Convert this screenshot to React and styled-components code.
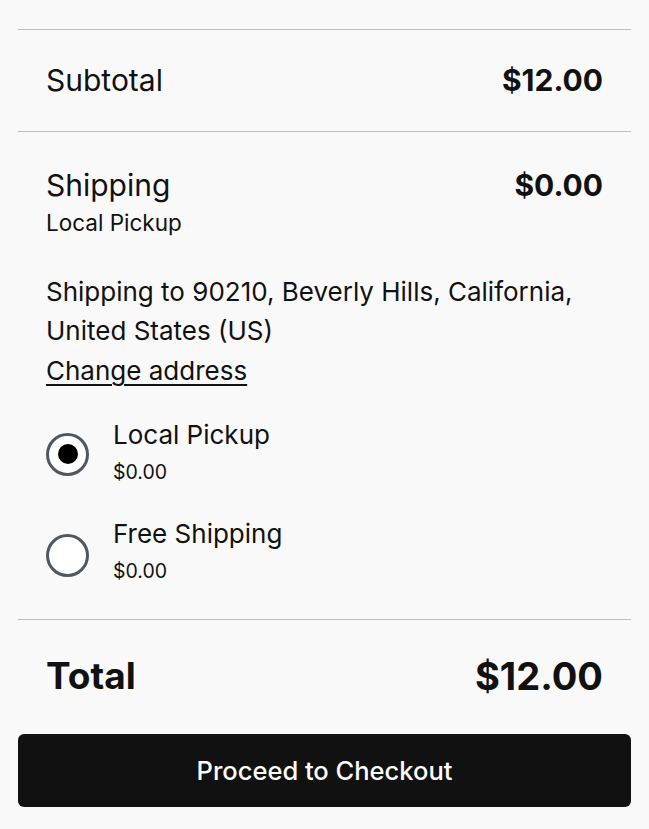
import React, {useState} from 'react';
import styled, {createGlobalStyle} from 'styled-components';

const GlobalStyle = createGlobalStyle`
    body {
        margin: 0;
        background: #f9f9f9;
        font-family: Inter, "Noto Sans", sans-serif;
        color: #111;
    }
`;

const Wrapper = styled.div`
    padding: 29px 18px 22px;
`;

const Section = styled.div`
    border-top: 1px solid #bdbdbd;
    padding: ${props => props.pad || '0 28px'};
`;

const Row = styled.div`
    display: flex;
    justify-content: space-between;
    align-items: ${props => props.top ? 'flex-start' : 'center'};
`;

const Label = styled.span`
    font-size: ${props => props.big ? '37px' : '30px'};
    font-weight: ${props => props.big ? 700 : 400};
    line-height: ${props => props.big ? '52px' : '42px'};
`;

const Amount = styled.span`
    font-size: ${props => props.big ? '38px' : '30px'};
    font-weight: 700;
    line-height: ${props => props.big ? '52px' : '42px'};
`;

const Sub = styled.div`
    font-size: 22.5px;
    line-height: 30px;
    margin-top: 2px;
`;

const Address = styled.p`
    font-size: 26px;
    line-height: 39px;
    margin: 34px 0 0;
`;

const ChangeLink = styled.a`
    display: inline-block;
    font-size: 26px;
    line-height: 41px;
    color: #111;
    text-decoration: underline;
    text-underline-offset: 4px;
    text-decoration-thickness: 2px;
`;

const Options = styled.div`
    display: flex;
    flex-direction: column;
    gap: 29px;
    margin-top: 26px;
`;

const Option = styled.label`
    display: flex;
    align-items: center;
    gap: 24px;
    cursor: pointer;
`;

const Radio = styled.span`
    width: 43px;
    height: 43px;
    margin-top: ${props => props.checked ? '4px' : '8px'};
    box-sizing: border-box;
    border-radius: 50%;
    border: 3px solid #50575e;
    background: #fff;
    display: flex;
    align-items: center;
    justify-content: center;
    flex-shrink: 0;
    &::after {
        content: '';
        width: 20px;
        height: 20px;
        border-radius: 50%;
        background: #000;
        display: ${props => props.checked ? 'block' : 'none'};
    }
`;

const OptionName = styled.div`
    font-size: 26px;
    line-height: 36px;
`;

const OptionPrice = styled.div`
    font-size: 19.5px;
    line-height: 30px;
    margin-top: 4px;
`;

const CheckoutButton = styled.button`
    display: block;
    width: 100%;
    height: 73px;
    margin-top: 32px;
    border: none;
    border-radius: 6px;
    background: #111;
    color: #fff;
    font-family: Inter, "Noto Sans", sans-serif;
    font-size: 25.5px;
    font-weight: 500;
    cursor: pointer;
`;

const rates = [
    {id: 'pickup', name: 'Local Pickup', price: '$0.00'},
    {id: 'free', name: 'Free Shipping', price: '$0.00'},
];

export default function App() {
    const [rate, setRate] = useState('pickup');
    const current = rates.find(r => r.id === rate);

    return (
        <Wrapper>
            <GlobalStyle/>
            <Section pad="29px 28px 30px">
                <Row>
                    <Label>Subtotal</Label>
                    <Amount>$12.00</Amount>
                </Row>
            </Section>
            <Section pad="32px 28px 33px">
                <Row top>
                    <div>
                        <Label>Shipping</Label>
                        <Sub>{current.name}</Sub>
                    </div>
                    <Amount>$0.00</Amount>
                </Row>
                <Address>Shipping to 90210, Beverly Hills, California, United States (US)</Address>
                <ChangeLink href="#">Change address</ChangeLink>
                <Options>
                    {rates.map(r => (
                        <Option key={r.id} onClick={() => setRate(r.id)}>
                            <Radio checked={rate === r.id}/>
                            <div>
                                <OptionName>{r.name}</OptionName>
                                <OptionPrice>{r.price}</OptionPrice>
                            </div>
                        </Option>
                    ))}
                </Options>
            </Section>
            <Section pad="30px 28px 0">
                <Row>
                    <Label big>Total</Label>
                    <Amount big>$12.00</Amount>
                </Row>
            </Section>
            <CheckoutButton>Proceed to Checkout</CheckoutButton>
        </Wrapper>
    );
}
